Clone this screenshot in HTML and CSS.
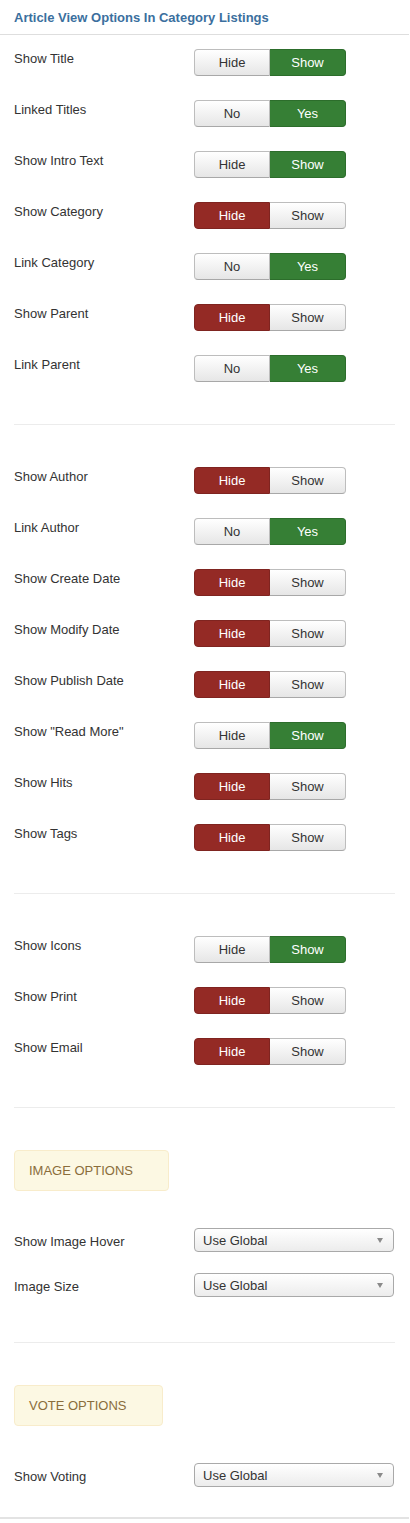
FILE: index.html
```html
<!DOCTYPE html>
<html>
<head>
<meta charset="utf-8">
<title>Article View Options</title>
<link rel="stylesheet" href="styles.css">
</head>
<body>
<div class="panel">
  <div class="legend">Article View Options In Category Listings</div>
  <div class="content">
    <div class="group">
      <div class="row"><div class="label">Show Title</div><div class="toggle"><span class="btn">Hide</span><span class="btn on-green">Show</span></div></div>
      <div class="row"><div class="label">Linked Titles</div><div class="toggle"><span class="btn">No</span><span class="btn on-green">Yes</span></div></div>
      <div class="row"><div class="label">Show Intro Text</div><div class="toggle"><span class="btn">Hide</span><span class="btn on-green">Show</span></div></div>
      <div class="row"><div class="label">Show Category</div><div class="toggle"><span class="btn on-red">Hide</span><span class="btn">Show</span></div></div>
      <div class="row"><div class="label">Link Category</div><div class="toggle"><span class="btn">No</span><span class="btn on-green">Yes</span></div></div>
      <div class="row"><div class="label">Show Parent</div><div class="toggle"><span class="btn on-red">Hide</span><span class="btn">Show</span></div></div>
      <div class="row"><div class="label">Link Parent</div><div class="toggle"><span class="btn">No</span><span class="btn on-green">Yes</span></div></div>
    </div>
    <div class="sep"></div>
    <div class="group">
      <div class="row"><div class="label">Show Author</div><div class="toggle"><span class="btn on-red">Hide</span><span class="btn">Show</span></div></div>
      <div class="row"><div class="label">Link Author</div><div class="toggle"><span class="btn">No</span><span class="btn on-green">Yes</span></div></div>
      <div class="row"><div class="label">Show Create Date</div><div class="toggle"><span class="btn on-red">Hide</span><span class="btn">Show</span></div></div>
      <div class="row"><div class="label">Show Modify Date</div><div class="toggle"><span class="btn on-red">Hide</span><span class="btn">Show</span></div></div>
      <div class="row"><div class="label">Show Publish Date</div><div class="toggle"><span class="btn on-red">Hide</span><span class="btn">Show</span></div></div>
      <div class="row"><div class="label">Show "Read More"</div><div class="toggle"><span class="btn">Hide</span><span class="btn on-green">Show</span></div></div>
      <div class="row"><div class="label">Show Hits</div><div class="toggle"><span class="btn on-red">Hide</span><span class="btn">Show</span></div></div>
      <div class="row"><div class="label">Show Tags</div><div class="toggle"><span class="btn on-red">Hide</span><span class="btn">Show</span></div></div>
    </div>
    <div class="sep"></div>
    <div class="group">
      <div class="row"><div class="label">Show Icons</div><div class="toggle"><span class="btn">Hide</span><span class="btn on-green">Show</span></div></div>
      <div class="row"><div class="label">Show Print</div><div class="toggle"><span class="btn on-red">Hide</span><span class="btn">Show</span></div></div>
      <div class="row"><div class="label">Show Email</div><div class="toggle"><span class="btn on-red">Hide</span><span class="btn">Show</span></div></div>
    </div>
    <div class="sep"></div>
    <div class="notice">IMAGE OPTIONS</div>
    <div class="group">
      <div class="srow"><div class="label slabel">Show Image Hover</div><div class="select"><span>Use Global</span><span class="caret"></span></div></div>
      <div class="srow"><div class="label slabel">Image Size</div><div class="select"><span>Use Global</span><span class="caret"></span></div></div>
    </div>
    <div class="sep sep-wide"></div>
    <div class="notice">VOTE OPTIONS</div>
    <div class="group">
      <div class="srow last"><div class="label slabel">Show Voting</div><div class="select"><span>Use Global</span><span class="caret"></span></div></div>
    </div>
  </div>
</div>
</body>
</html>
```

FILE: styles.css
```css
html, body {
  margin: 0;
  padding: 0;
  background: #fff;
}

body {
  font-family: "Liberation Sans", Arial, sans-serif;
  font-size: 13px;
  color: #333;
}

.panel {
  width: 409px;
  border-bottom: 2px solid #e3e3e3;
}

.legend {
  padding: 11px 14px 9px;
  line-height: 14px;
  font-weight: bold;
  color: #3b6f9e;
  border-bottom: 1px solid #dedede;
}

.content {
  padding: 14px 14px 30px;
}

.row {
  display: flex;
  align-items: flex-start;
  margin-bottom: 24px;
}

.label {
  width: 180px;
  flex: none;
  padding-top: 1px;
  line-height: 18px;
  color: #333;
}

.toggle {
  display: flex;
  border-radius: 4px;
}

.btn {
  box-sizing: border-box;
  width: 76px;
  height: 27px;
  padding-top: 1px;
  line-height: 24px;
  text-align: center;
  color: #333;
  background: linear-gradient(#ffffff, #e6e6e6);
  border: 1px solid #bdbdbd;
  border-bottom-color: #a8a8a8;
}

.btn:first-child {
  border-radius: 4px 0 0 4px;
}

.btn:last-child {
  border-left: none;
  border-radius: 0 4px 4px 0;
}

.btn.on-green {
  background: #367f35;
  border-color: #2c6d2b;
  color: #fff;
}

.btn.on-red {
  background: #942a25;
  border-color: #7f2420;
  color: #fff;
}

.sep {
  border-top: 1px solid #ececec;
  margin: 42px 0 42px;
}

.sep-wide {
  margin-top: 45px;
}

.notice {
  width: fit-content;
  padding: 11px 35px 11px 14px;
  line-height: 17px;
  color: #8a6d3b;
  background: #fcf8e3;
  border: 1px solid #f8eccb;
  border-radius: 4px;
  margin-bottom: 37px;
}

.srow {
  display: flex;
  align-items: flex-start;
  margin-bottom: 21px;
}

.srow.last {
  margin-bottom: 0;
}

.slabel {
  padding-top: 5px;
}

.select {
  box-sizing: border-box;
  width: 200px;
  height: 24px;
  display: flex;
  align-items: center;
  justify-content: space-between;
  padding: 1px 10px 0 8px;
  border: 1px solid #a9a9a9;
  border-radius: 4px;
  background: linear-gradient(#ffffff, #ececec);
  color: #333;
  line-height: 21px;
}

.caret {
  width: 0;
  height: 0;
  border-left: 3.5px solid transparent;
  border-right: 3.5px solid transparent;
  border-top: 5px solid #8a8a8a;
}
```
